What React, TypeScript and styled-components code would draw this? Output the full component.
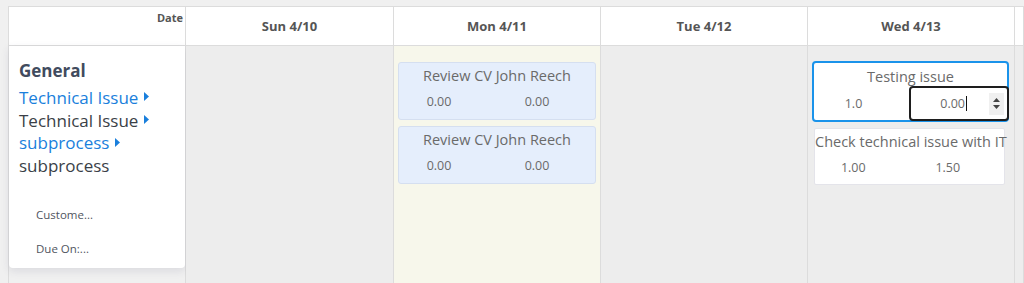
import styled, { createGlobalStyle } from 'styled-components'

const GlobalStyle = createGlobalStyle`
    html, body {
        margin: 0;
        padding: 0;
        background: #f0f0f0;
        font-family: 'Open Sans', 'Liberation Sans', sans-serif;
        overflow: hidden;
    }
`

const days = [
    { label: 'Sun 4/10', today: false },
    { label: 'Mon 4/11', today: true },
    { label: 'Tue 4/12', today: false },
    { label: 'Wed 4/13', today: false },
]

const tasks = [
    { name: 'Technical Issue', link: true, arrow: true },
    { name: 'Technical Issue', link: false, arrow: true },
    { name: 'subprocess', link: true, arrow: true },
    { name: 'subprocess', link: false, arrow: false },
]

const Caret = () => (
    <svg width='5' height='9' viewBox='0 0 5 9'>
        <path d='M0 0 L5 4.5 L0 9 Z' fill='currentColor' />
    </svg>
)

const Spinner = () => (
    <svg width='9' height='13' viewBox='0 0 9 13'>
        <path d='M4.5 1 L8 5 L1 5 Z' fill='#444' />
        <path d='M4.5 12 L8 8 L1 8 Z' fill='#444' />
    </svg>
)

export default function App() {
    return (
        <Page>
            <GlobalStyle />
            <Grid>
                <DateHead>Date</DateHead>
                {days.map((d) => (
                    <DayHead key={d.label}>{d.label}</DayHead>
                ))}
                <DayHead />

                <SideCell>
                    <SideCard>
                        <Group>General</Group>
                        {tasks.map((t, i) => (
                            <TaskLink key={i} $link={t.link}>
                                {t.name}
                                {t.arrow && <Caret />}
                            </TaskLink>
                        ))}
                        <Meta>
                            <MetaItem>Custome...</MetaItem>
                            <MetaItem>Due On:...</MetaItem>
                        </Meta>
                    </SideCard>
                </SideCell>

                <DayCell />
                <DayCell $today>
                    <Entry>
                        <Title>Review CV John Reech</Title>
                        <Nums>
                            <Num>0.00</Num>
                            <Num>0.00</Num>
                        </Nums>
                    </Entry>
                    <Entry>
                        <Title>Review CV John Reech</Title>
                        <Nums>
                            <Num>0.00</Num>
                            <Num>0.00</Num>
                        </Nums>
                    </Entry>
                </DayCell>
                <DayCell />
                <DayCell>
                    <ActiveEntry>
                        <Title>Testing issue</Title>
                        <EditRow>
                            <EditValue>1.0</EditValue>
                            <HourInput>
                                <InputText>
                                    0.00
                                    <Cursor />
                                </InputText>
                                <SpinBox>
                                    <Spinner />
                                </SpinBox>
                            </HourInput>
                        </EditRow>
                    </ActiveEntry>
                    <PlainEntry>
                        <Title>Check technical issue with IT</Title>
                        <Nums>
                            <Num>1.00</Num>
                            <Num>1.50</Num>
                        </Nums>
                    </PlainEntry>
                </DayCell>
                <DayCell />
            </Grid>
        </Page>
    )
}

const Page = styled.div`
    width: 1024px;
    height: 283px;
    padding: 7px 0 0 8px;
    box-sizing: border-box;
`

const Grid = styled.div`
    display: grid;
    grid-template-columns: 177px 208px 207px 207px 207px 1fr;
    grid-template-rows: 39px 237px;
    border-left: 1px solid #dcdcdc;
    border-top: 1px solid #dcdcdc;
    margin-top: -1px;
`

const DateHead = styled.div`
    background: #fff;
    border-right: 1px solid #dcdcdc;
    border-bottom: 1px solid #dcdcdc;
    text-align: right;
    font-size: 11px;
    font-weight: 700;
    color: #555;
    padding: 3px 2px 0 0;
`

const DayHead = styled.div`
    background: #fff;
    border-right: 1px solid #dcdcdc;
    border-bottom: 1px solid #dcdcdc;
    display: flex;
    align-items: center;
    justify-content: center;
    font-size: 13px;
    font-weight: 700;
    color: #555;
`

const SideCell = styled.div`
    border-right: 1px solid #dcdcdc;
    background: #f0f0f0;
`

const SideCard = styled.div`
    background: #fff;
    border-radius: 0 0 4px 4px;
    box-shadow: 0 3px 8px rgba(60, 60, 100, 0.12);
    height: 222px;
    padding: 14px 0 0 10px;
    box-sizing: border-box;
`

const Group = styled.div`
    font-size: 17px;
    font-weight: 700;
    color: #414b5e;
    line-height: 22px;
    margin-bottom: 5px;
`

const TaskLink = styled.div<{ $link: boolean }>`
    display: flex;
    align-items: center;
    gap: 6px;
    font-size: 17px;
    line-height: 22.7px;
    color: ${(p) => (p.$link ? '#1a7fdc' : '#3a3f47')};
    svg {
        color: #1a7fdc;
        margin-top: -3px;
    }
`

const Meta = styled.div`
    display: flex;
    flex-direction: column;
    gap: 17px;
    padding: 28px 0 0 17px;
`

const MetaItem = styled.div`
    font-size: 11.5px;
    color: #505560;
    line-height: 17px;
`

const DayCell = styled.div<{ $today?: boolean }>`
    background: ${(p) => (p.$today ? '#f7f7eb' : '#ededed')};
    border-right: 1px solid #dcdcdc;
    padding: 16px 4px 0 4px;
    display: flex;
    flex-direction: column;
    gap: 6px;
`

const Entry = styled.div`
    background: #e5eefc;
    border: 1px solid #d5dff0;
    border-radius: 3px;
    height: 58px;
    box-sizing: border-box;
    text-align: center;
    color: #6a6a6a;
    padding-top: 1px;
`

const PlainEntry = styled(Entry)`
    background: #fff;
    border: 1px solid #e4e4ea;
    border-radius: 2px;
    margin: 0 5px 0 2px;
    height: 57px;
`

const ActiveEntry = styled.div`
    background: #fff;
    border: 2px solid #1a93ea;
    border-radius: 4px;
    height: 61px;
    box-sizing: border-box;
    text-align: center;
    color: #6a6a6a;
    margin-top: -1px;
    margin-right: 1px;
    padding-top: 2px;
`

const Title = styled.div`
    font-size: 14.5px;
    line-height: 22px;
    padding-top: 1px;
    white-space: nowrap;
`

const Nums = styled.div`
    display: grid;
    grid-template-columns: 1fr 1fr;
    font-size: 12.5px;
    line-height: 18px;
    padding: 6px 0 0 0;
`

const Num = styled.span`
    padding-right: 18px;
`

const EditRow = styled.div`
    display: grid;
    grid-template-columns: 1fr 98px;
    align-items: center;
    font-size: 12.5px;
    margin-top: -2px;
`

const EditValue = styled.span`
    padding-right: 16px;
`

const HourInput = styled.div`
    height: 35px;
    border: 2px solid #1e1e1e;
    border-radius: 4px;
    box-sizing: border-box;
    display: flex;
    align-items: center;
    justify-content: flex-end;
    padding-right: 3px;
    margin-right: -2px;
`

const InputText = styled.span`
    display: flex;
    align-items: center;
    font-size: 12.5px;
    color: #6a6a6a;
    margin-right: 22px;
`

const Cursor = styled.span`
    width: 1px;
    height: 15px;
    background: #111;
    margin-left: 1px;
`

const SpinBox = styled.span`
    width: 15px;
    height: 22px;
    background: #f0f0f0;
    display: flex;
    align-items: center;
    justify-content: center;
`
